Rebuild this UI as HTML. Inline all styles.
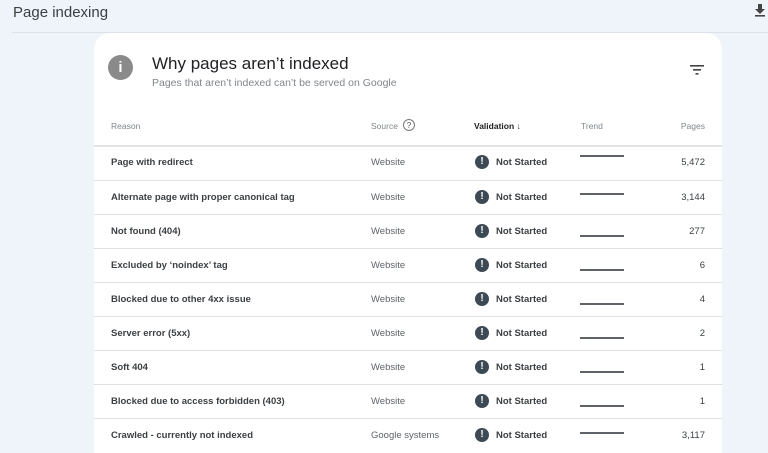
<!DOCTYPE html>
<html><head><style>
*{margin:0;padding:0;box-sizing:border-box}
body{width:768px;height:441px;overflow:hidden;background:#eff3fa;font-family:"Liberation Sans",Arial,sans-serif;position:relative;color:#202124}
.a{position:absolute;white-space:nowrap}
.card{position:absolute;left:94px;top:33px;width:628px;height:420px;background:#fff;border-radius:16px 16px 0 0}
.row{position:absolute;left:0;width:628px;height:34px;border-top:1px solid #e0e0e0;font-size:9.5px}
.row span{position:absolute;top:11px}
.r{left:17px;font-weight:bold;color:#3c4043}
.s{left:277px;color:#5f6368}
.v{left:381px;top:9px!important;width:14px;height:14px;border-radius:50%;background:#3c4a55;color:#fff;font-weight:bold;font-size:10px;display:flex;align-items:center;justify-content:center;line-height:1}
.vt{left:402px;font-weight:bold;color:#3c4043}
.t{left:486px;width:44px;height:1.5px;background:#5f6368;top:auto!important}
.p{right:17px;color:#3c4043}
</style></head><body>
<div class="a" style="left:13px;top:4px;font-size:15px;color:#3c4043">Page indexing</div>
<svg class="a" style="left:753px;top:3px" width="14" height="14" viewBox="0 0 14 14"><path d="M5 1h4v5h3l-5 5-5-5h3z" fill="#444"/><rect x="2" y="12" width="10" height="1.6" fill="#444"/></svg>
<div class="a" style="left:12px;top:32px;width:756px;height:1px;background:#dde2ea"></div>
<div class="card">
<div class="a" style="left:14px;top:22px;width:25px;height:25px;border-radius:50%;background:#8a8a8a;color:#fff;font-weight:bold;font-size:15px;display:flex;align-items:center;justify-content:center">i</div>
<div class="a" style="left:58px;top:21px;font-size:17px;color:#202124">Why pages aren’t indexed</div>
<div class="a" style="left:58px;top:44px;font-size:10.5px;color:#80868b">Pages that aren’t indexed can’t be served on Google</div>
<svg class="a" style="left:596px;top:31px" width="14" height="12" viewBox="0 0 14 12"><rect x="0" y="1" width="14" height="1.6" fill="#444"/><rect x="3" y="5" width="8" height="1.6" fill="#444"/><rect x="5.5" y="9" width="3" height="1.6" fill="#444"/></svg>
<div class="a" style="left:17px;top:88px;font-size:8.5px;color:#80868b">Reason</div>
<div class="a" style="left:277px;top:88px;font-size:8.5px;color:#80868b">Source</div>
<div class="a" style="left:309px;top:86px;width:12px;height:12px;border:1px solid #777;border-radius:50%;font-size:8px;display:flex;align-items:center;justify-content:center;color:#555">?</div>
<div class="a" style="left:380px;top:88px;font-size:8.5px;color:#202124;font-weight:bold">Validation ↓</div>
<div class="a" style="left:487px;top:88px;font-size:8.5px;color:#80868b">Trend</div>
<div class="a" style="right:17px;top:88px;font-size:8.5px;color:#80868b">Pages</div>
<div class="a" style="left:0;top:112px;width:628px;height:2px;background:#e4e4e4"></div>
<div class="row" style="top:113px;border-top:none"><span class="r">Page with redirect</span><span class="s">Website</span><span class="v">!</span><span class="vt">Not Started</span><span class="t" style="top:9px!important"></span><span class="p">5,472</span></div>
<div class="row" style="top:147px"><span class="r">Alternate page with proper canonical tag</span><span class="s">Website</span><span class="v">!</span><span class="vt">Not Started</span><span class="t" style="top:12px!important"></span><span class="p">3,144</span></div>
<div class="row" style="top:181px"><span class="r">Not found (404)</span><span class="s">Website</span><span class="v">!</span><span class="vt">Not Started</span><span class="t" style="top:20px!important"></span><span class="p">277</span></div>
<div class="row" style="top:215px"><span class="r">Excluded by ‘noindex’ tag</span><span class="s">Website</span><span class="v">!</span><span class="vt">Not Started</span><span class="t" style="top:20px!important"></span><span class="p">6</span></div>
<div class="row" style="top:249px"><span class="r">Blocked due to other 4xx issue</span><span class="s">Website</span><span class="v">!</span><span class="vt">Not Started</span><span class="t" style="top:20px!important"></span><span class="p">4</span></div>
<div class="row" style="top:283px"><span class="r">Server error (5xx)</span><span class="s">Website</span><span class="v">!</span><span class="vt">Not Started</span><span class="t" style="top:20px!important"></span><span class="p">2</span></div>
<div class="row" style="top:317px"><span class="r">Soft 404</span><span class="s">Website</span><span class="v">!</span><span class="vt">Not Started</span><span class="t" style="top:20px!important"></span><span class="p">1</span></div>
<div class="row" style="top:351px"><span class="r">Blocked due to access forbidden (403)</span><span class="s">Website</span><span class="v">!</span><span class="vt">Not Started</span><span class="t" style="top:20px!important"></span><span class="p">1</span></div>
<div class="row" style="top:385px"><span class="r">Crawled - currently not indexed</span><span class="s">Google systems</span><span class="v">!</span><span class="vt">Not Started</span><span class="t" style="top:13px!important"></span><span class="p">3,117</span></div>
</div>
</body></html>
